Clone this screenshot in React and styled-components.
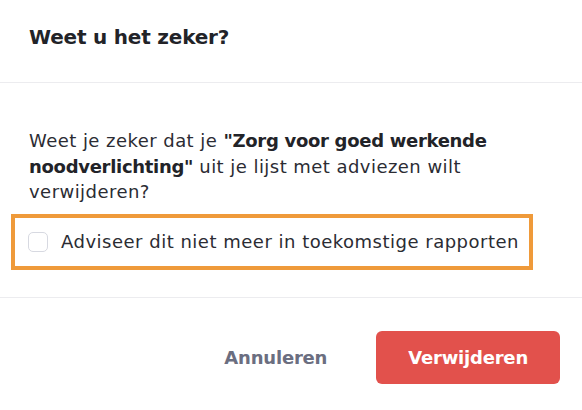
import React from "react";
import styled, { createGlobalStyle } from "styled-components";

const Global = createGlobalStyle`
  html, body { margin: 0; padding: 0; background: #ffffff; }
  body { font-family: "DejaVu Sans", "Open Sans", sans-serif; -webkit-font-smoothing: antialiased; }
`;

const Dialog = styled.div`
  width: 582px;
  height: 410px;
  background: #fff;
  display: flex;
  flex-direction: column;
`;

const Header = styled.header`
  height: 83px;
  box-sizing: border-box;
  border-bottom: 1px solid #ececef;
  padding: 24px 29px 0;
`;

const Title = styled.h2`
  margin: 0;
  font-size: 20px;
  line-height: 26px;
  font-weight: 700;
  letter-spacing: -0.2px;
  color: #222328;
`;

const Body = styled.section`
  padding: 45px 11px 27px;
  border-bottom: 1px solid #ececef;
  display: flex;
  flex-direction: column;
  gap: 9px;
`;

const Message = styled.p`
  margin: 0;
  padding: 0 18px;
  max-width: 500px;
  font-size: 18px;
  line-height: 25.5px;
  letter-spacing: 0.45px;
  color: #2b2c33;
  strong { font-weight: 700; color: #222328; letter-spacing: -0.3px; }
`;

const Highlight = styled.label`
  width: 522px;
  height: 56px;
  box-sizing: border-box;
  border: 4px solid #ef9a3a;
  display: flex;
  align-items: center;
  gap: 13px;
  padding-left: 13px;
  cursor: pointer;
`;

const Box = styled.span`
  width: 20px;
  height: 20px;
  box-sizing: border-box;
  border: 1.5px solid #d7d9e1;
  border-radius: 5px;
  background: #fff;
  flex: none;
`;

const LabelText = styled.span`
  font-size: 18px;
  letter-spacing: 0.5px;
  color: #2b2c33;
`;

const Footer = styled.footer`
  display: flex;
  justify-content: flex-end;
  align-items: center;
  gap: 16px;
  padding: 33px 22px 0;
`;

const Button = styled.button`
  font-family: "DejaVu Sans", "Open Sans", sans-serif;
  font-size: 18px;
  font-weight: 700;
  letter-spacing: -0.2px;
  height: 53px;
  border: none;
  border-radius: 6px;
  cursor: pointer;
  padding: ${(p) => (p.$primary ? "0 32px" : "0 33px")};
  background: ${(p) => (p.$primary ? "#e2514c" : "transparent")};
  color: ${(p) => (p.$primary ? "#ffffff" : "#6b6e80")};
`;

export default function App() {
  return (
    <>
      <Global />
      <Dialog>
        <Header>
          <Title>Weet u het zeker?</Title>
        </Header>
        <Body>
          <Message>
            Weet je zeker dat je <strong>"Zorg voor goed werkende noodverlichting"</strong> uit je lijst met adviezen wilt verwijderen?
          </Message>
          <Highlight>
            <Box />
            <LabelText>Adviseer dit niet meer in toekomstige rapporten</LabelText>
          </Highlight>
        </Body>
        <Footer>
          <Button>Annuleren</Button>
          <Button $primary>Verwijderen</Button>
        </Footer>
      </Dialog>
    </>
  );
}
